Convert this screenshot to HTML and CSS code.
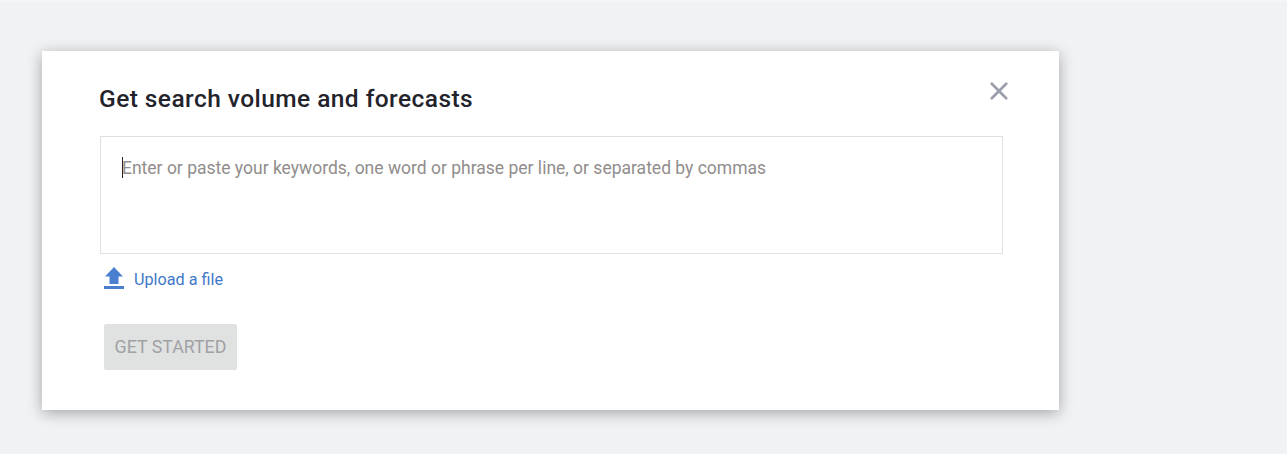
FILE: index.html
```html
<!DOCTYPE html>
<html lang="en">
<head>
    <meta charset="UTF-8">
    <title>Get search volume and forecasts</title>
    <link rel="stylesheet" href="styles.css">
</head>
<body>
    <div class="dialog">
        <div class="dialog-header">
            <h1>Get search volume and forecasts</h1>
            <button class="close" aria-label="Close">
                <svg viewBox="0 0 20 20"><path d="M2 2 L18 18 M18 2 L2 18" stroke="#9a9fab" stroke-width="3" stroke-linecap="round" fill="none"/></svg>
            </button>
        </div>
        <div class="keywords">
            <span class="caret"></span><span class="placeholder">Enter or paste your keywords, one word or phrase per line, or separated by commas</span>
        </div>
        <a class="upload" href="#">
            <svg width="20" height="22" viewBox="0 0 20 22"><path d="M10 0 L19 9.5 H14.5 V17 H5.5 V9.5 H1 Z M0 19 H20 V22 H0 Z" fill="#4a7fcf"/></svg>
            <span>Upload a file</span>
        </a>
        <button class="start" disabled>GET STARTED</button>
    </div>
</body>
</html>
```

FILE: styles.css
```css
* {
    box-sizing: border-box;
    margin: 0;
    padding: 0;
    font-family: Roboto, sans-serif;
}

body {
    background: #f1f2f4;
    border-top: 2px solid #f4f5f6;
    padding: 49px 0 0 42px;
    height: 454px;
    overflow: hidden;
}

.dialog {
    width: 1017px;
    height: 359px;
    background: white;
    padding: 31px 56px 0 58px;
    box-shadow: 0 3px 14px rgba(0, 0, 0, 0.32);
}

.dialog-header {
    display: flex;
    justify-content: space-between;
    align-items: flex-start;
    height: 54px;
}

h1 {
    font-size: 24.5px;
    font-weight: 500;
    line-height: 33px;
    letter-spacing: 0.44px;
    color: #23232b;
    margin-left: -1px;
}

.close {
    background: none;
    border: none;
    width: 18px;
    height: 18px;
    margin-right: -5px;
    cursor: pointer;
}

.close svg {
    display: block;
    width: 18px;
    height: 18px;
}

.keywords {
    display: flex;
    align-items: flex-start;
    height: 118px;
    border: 1px solid #e0e0e0;
    padding: 20px 21px 0;
}

.caret {
    width: 1px;
    height: 21px;
    background: #23232b;
    margin-right: -1px;
}

.placeholder {
    font-size: 17.5px;
    line-height: 21px;
    margin-top: 1px;
    color: #918d8c;
}

.upload {
    display: flex;
    align-items: center;
    gap: 10px;
    margin: 13px 0 0 4px;
    font-size: 16.2px;
    color: #3f78c8;
    text-decoration: none;
}

.upload span {
    padding-top: 2px;
}

.start {
    display: block;
    width: 133px;
    height: 46px;
    margin: 35px 0 0 4px;
    padding-bottom: 2px;
    background: #e0e1e1;
    border: none;
    border-radius: 2px;
    font-size: 17.8px;
    color: #a0a1a5;
}
```
